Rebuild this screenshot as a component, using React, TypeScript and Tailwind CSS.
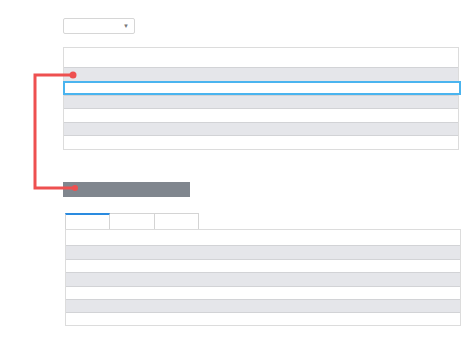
const rows1 = ["gray", "active", "gray", "white", "gray", "white"];
const h1 = ["h-[14px]", "h-[14px]", "h-[13px]", "h-[14px]", "h-[13px]", "h-[14px]"];
const rows2 = ["gray", "white", "gray", "white", "gray", "white"];
const h2 = ["h-[14px]", "h-[13px]", "h-[14px]", "h-[13px]", "h-[13px]", "h-[13px]"];

export default function App() {
  return (
    <div className="relative w-[474px] h-[348px] bg-white font-['Liberation_Sans',sans-serif]">
      <div className="flex flex-col pl-[63px] pt-[18px]">
        {/* Select */}
        <div className="flex items-center justify-end w-[72px] h-[16px] border border-[#d6d6d6] rounded-[2px] pr-[5px]">
          <span className="text-[6px] leading-none text-[#777]">▼</span>
        </div>

        {/* Table 1 */}
        <div className="mt-[13px] w-[396px] border border-[#dcdcdc] flex flex-col">
          <div className="h-[19px] bg-white" />
          {rows1.map((r, i) =>
            r === "active" ? (
              <div
                key={i}
                className={`${h1[i]} -mx-[1px] w-[398px] border-2 border-[#4ab4ef] bg-white`}
              />
            ) : (
              <div
                key={i}
                className={`${h1[i]} border-t border-[#d2d3d6] ${r === "gray" ? "bg-[#e5e6ea]" : "bg-white"}`}
              />
            )
          )}
        </div>

        {/* Gray bar */}
        <div className="mt-[32px] w-[127px] h-[15px] bg-[#80868e]" />

        {/* Tabs */}
        <div className="mt-[16px] ml-[2px] flex">
          <div className="w-[45px] h-[16px] border border-[#d4d4d4] border-t-2 border-t-[#2a8be0] border-b-0" />
          <div className="w-[45px] h-[16px] border border-l-0 border-[#d4d4d4] border-b-0" />
          <div className="w-[44px] h-[16px] border border-l-0 border-[#d4d4d4] border-b-0" />
        </div>

        {/* Table 2 */}
        <div className="ml-[2px] w-[396px] border border-[#dcdcdc] flex flex-col">
          <div className="h-[15px] bg-white" />
          {rows2.map((r, i) => (
            <div
              key={i}
              className={`${h2[i]} border-t border-[#d2d3d6] ${r === "gray" ? "bg-[#e5e6ea]" : "bg-white"}`}
            />
          ))}
        </div>
      </div>

      {/* Connector */}
      <svg className="absolute left-0 top-0" width="474" height="348">
        <polyline
          points="73,75 35,75 35,188 75,188"
          fill="none"
          stroke="#ee5050"
          strokeWidth="3"
        />
        <circle cx="73" cy="75" r="3.5" fill="#ee5050" />
        <circle cx="75" cy="188" r="3" fill="#ee5050" />
      </svg>
    </div>
  );
}
